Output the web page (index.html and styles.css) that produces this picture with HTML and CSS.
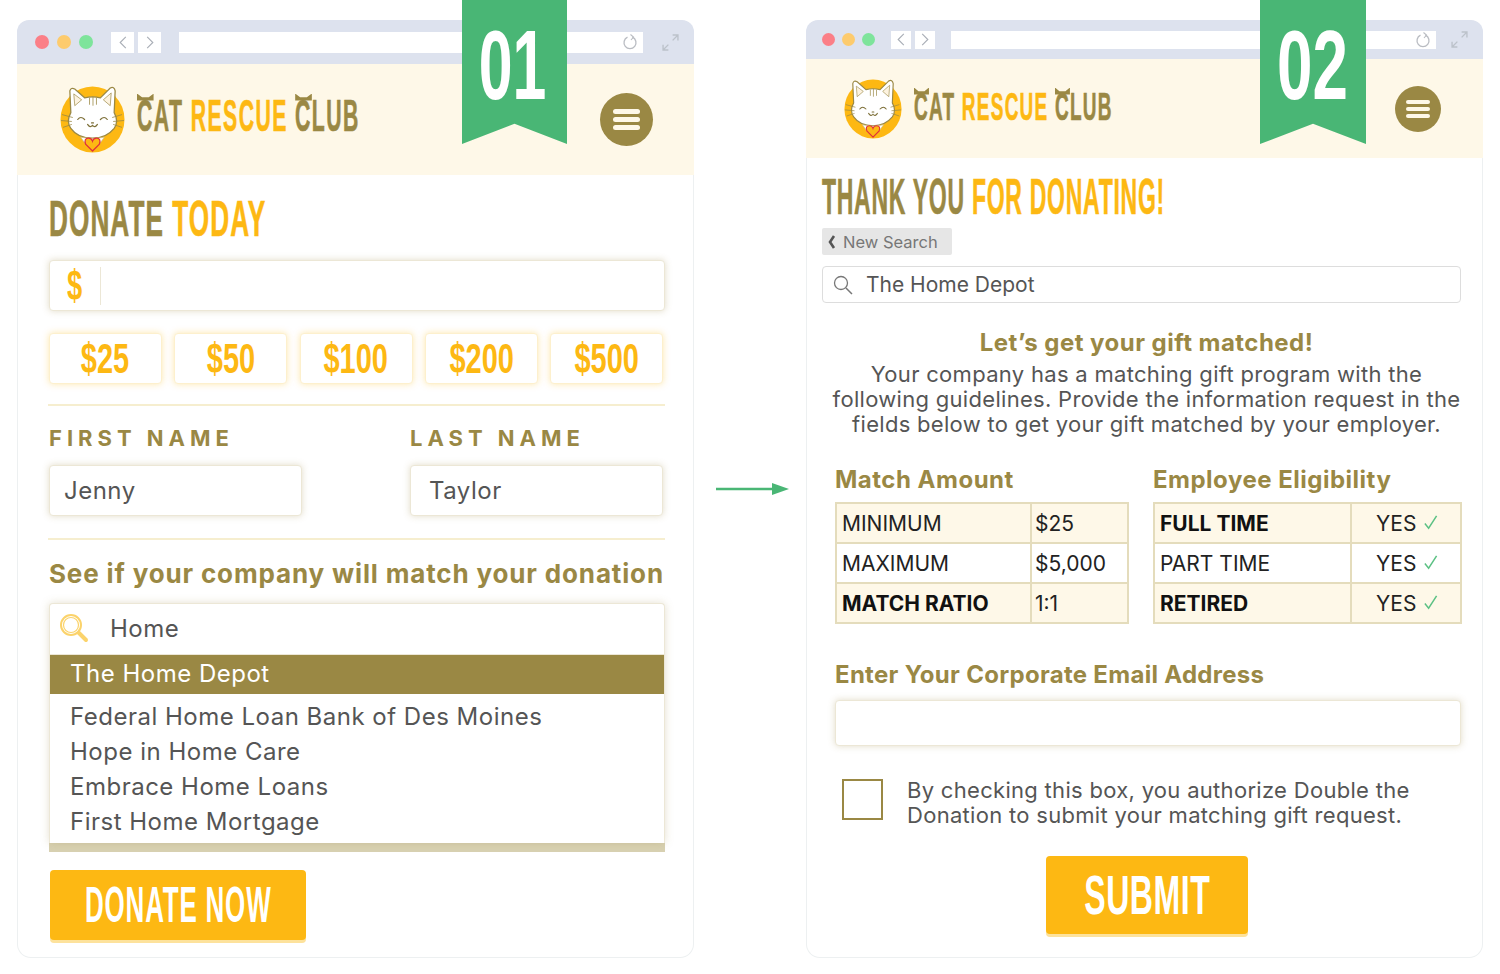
FILE: index.html
```html
<!DOCTYPE html>
<html lang="en">
<head>
    <meta charset="UTF-8">
    <title>Cat Rescue Club</title>
    <link rel="stylesheet" href="styles.css">
</head>
<body>
    <svg class="defs" width="0" height="0">
        <symbol id="cat" viewBox="0 0 66 68">
            <ellipse cx="33" cy="34" rx="32.500" ry="33.500" fill="#fdb813"/>
            <path d="M11 27 L10 5 Q11 1 15 3 L25 12 Q33 10 41 12 L51 2 Q55 0 56 5 L55 27 Q60 36 55 43 Q47 53 33 53 Q18 53 11 43 Q6 36 11 27 Z" fill="#fff" stroke="#9a8844" stroke-width="1.300"/>
            <path d="M14 8 L15 20 L22 14 Z M52 7 L51 20 L44 14 Z" fill="#fdf3e0" stroke="#9a8844" stroke-width=".7"/>
            <path d="M30 12 V19 M33.500 11 V20 M37 12 V19" stroke="#9a8844" stroke-width=".8" fill="none"/>
            <path d="M18 34 Q21 30 25 34 M41 34 Q45 30 48 34" stroke="#7d6f38" stroke-width="1.200" fill="none" stroke-linecap="round"/>
            <path d="M28 39 Q30.500 43 33 40 Q35.500 43 38 39 M32 37.500 H34" stroke="#7d6f38" stroke-width="1.200" fill="none" stroke-linecap="round"/>
            <path d="M2 29 L13 32 M1 35 L12 36 M3 42 L12 39 M53 32 L63 29 M54 36 L65 35 M54 39 L63 42" stroke="#9a8844" stroke-width=".8" fill="none"/>
            <path d="M21 52 L26 59 L40 59 L45 52 Q33 55 21 52 Z" fill="#fff" stroke="#c9bd8a" stroke-width=".7"/>
            <path d="M33 66 L26 59 Q24 53 29 53 Q32 53 33 56 Q34 53 37 53 Q42 53 40 59 Z" fill="#fdb813" stroke="#e0323a" stroke-width="1.300"/>
        </symbol>
        <symbol id="reload" viewBox="0 0 16 16">
            <path d="M10.500 3.200 A6 6 0 1 1 5.500 3.200" fill="none" stroke="#b9bcc2" stroke-width="1.300"/>
            <path d="M8.500 .5 L11.500 3 L9 6" fill="none" stroke="#b9bcc2" stroke-width="1.100"/>
        </symbol>
        <symbol id="expand" viewBox="0 0 16 16">
            <path d="M1 15 L6 10 M10 6 L15 1 M1 10 V15 H6 M10 1 H15 V6" fill="none" stroke="#bcc2ca" stroke-width="1.300"/>
        </symbol>
        <symbol id="tick" viewBox="0 0 16 16">
            <path d="M2 9 L6 14 L14.500 1" fill="none" stroke="#5cc184" stroke-width="1.600"/>
        </symbol>
    </svg>

    <div class="page">
        <section class="window window-one">
            <div class="ribbon"><span>01</span></div>
            <div class="chrome">
                <span class="dot red"></span>
                <span class="dot amber"></span>
                <span class="dot green"></span>
                <span class="nav"><svg viewBox="0 0 10 16"><path d="M8 2 L2 8 L8 14"/></svg></span>
                <span class="nav"><svg viewBox="0 0 10 16"><path d="M2 2 L8 8 L2 14"/></svg></span>
                <span class="url"><svg class="reload"><use href="#reload"/></svg></span>
                <svg class="expand"><use href="#expand"/></svg>
            </div>
            <header class="site-head">
                <div class="brand">
                    <svg class="cat"><use href="#cat"/></svg>
                    <div class="wordmark"><span class="eared">C</span>AT <em>RESCUE</em> <span class="eared">C</span>LUB</div>
                </div>
                <div class="menu"><i></i><i></i><i></i></div>
            </header>
            <div class="content">
                <h1 class="title">DONATE <em>TODAY</em></h1>
                <div class="field amount"><span class="dollar">$</span><span class="sep"></span></div>
                <div class="presets">
                    <div class="preset"><span>$25</span></div>
                    <div class="preset"><span>$50</span></div>
                    <div class="preset"><span>$100</span></div>
                    <div class="preset"><span>$200</span></div>
                    <div class="preset"><span>$500</span></div>
                </div>
                <div class="rule first-rule"></div>
                <div class="names">
                    <div>
                        <div class="label">FIRST NAME</div>
                        <div class="field name">Jenny</div>
                    </div>
                    <div>
                        <div class="label">LAST NAME</div>
                        <div class="field name last">Taylor</div>
                    </div>
                </div>
                <div class="rule second-rule"></div>
                <h2 class="match-head">See if your company will match your donation</h2>
                <div class="combo">
                    <div class="combo-input">
                        <svg class="gold-search" viewBox="0 0 30 30">
                            <circle cx="12" cy="12" r="10" fill="none" stroke="#fbd36b" stroke-width="2"/>
                            <circle cx="12" cy="12" r="7.500" fill="none" stroke="#fbd36b" stroke-width="1.200"/>
                            <path d="M20 20 L27 27" stroke="#fbd36b" stroke-width="4" stroke-linecap="round"/>
                        </svg>
                        <span>Home</span>
                    </div>
                    <div class="combo-active">The Home Depot</div>
                    <ul class="combo-list">
                        <li>Federal Home Loan Bank of Des Moines</li>
                        <li>Hope in Home Care</li>
                        <li>Embrace Home Loans</li>
                        <li>First Home Mortgage</li>
                    </ul>
                </div>
                <div class="btn donate"><span>DONATE NOW</span></div>
            </div>
        </section>

        <div class="flow-arrow">
            <svg width="74" height="14" viewBox="0 0 74 14">
                <path d="M0 7 H60" stroke="#49b675" stroke-width="2.500"/>
                <path d="M56 1 L73 7 L56 13 Z" fill="#49b675"/>
            </svg>
        </div>

        <section class="window window-two">
            <div class="ribbon"><span>02</span></div>
            <div class="chrome">
                <span class="dot red"></span>
                <span class="dot amber"></span>
                <span class="dot green"></span>
                <span class="nav"><svg viewBox="0 0 10 16"><path d="M8 2 L2 8 L8 14"/></svg></span>
                <span class="nav"><svg viewBox="0 0 10 16"><path d="M2 2 L8 8 L2 14"/></svg></span>
                <span class="url"><svg class="reload"><use href="#reload"/></svg></span>
                <svg class="expand"><use href="#expand"/></svg>
            </div>
            <header class="site-head">
                <div class="brand">
                    <svg class="cat"><use href="#cat"/></svg>
                    <div class="wordmark"><span class="eared">C</span>AT <em>RESCUE</em> <span class="eared">C</span>LUB</div>
                </div>
                <div class="menu"><i></i><i></i><i></i></div>
            </header>
            <div class="content">
                <h1 class="title">THANK YOU <em>FOR DONATING!</em></h1>
                <div class="chip"><svg viewBox="0 0 8 14"><path d="M6 1 L2 7 L6 13"/></svg>New Search</div>
                <div class="field found">
                    <svg class="grey-search" viewBox="0 0 20 20">
                        <circle cx="8" cy="8" r="6.500" fill="none" stroke="#777" stroke-width="1.300"/>
                        <path d="M13 13 L19 19" stroke="#777" stroke-width="1.500"/>
                    </svg>
                    <span>The Home Depot</span>
                </div>
                <h2 class="gift-head">Let’s get your gift matched!</h2>
                <p class="gift-copy">Your company has a matching gift program with the<br>following guidelines. Provide the information request in the<br>fields below to get your gift matched by your employer.</p>

                <div class="details">
                    <div class="table-grid">
                        <div>
                            <h3 class="sub-head">Match Amount</h3>
                            <table class="amount-table">
                                <tr><td>MINIMUM</td><td>$25</td></tr>
                                <tr><td>MAXIMUM</td><td>$5,000</td></tr>
                                <tr><td><b>MATCH RATIO</b></td><td>1:1</td></tr>
                            </table>
                        </div>
                        <div>
                            <h3 class="sub-head">Employee Eligibility</h3>
                            <table class="staff-table">
                                <tr><td><b>FULL TIME</b></td><td>YES <svg class="tick"><use href="#tick"/></svg></td></tr>
                                <tr><td>PART TIME</td><td>YES <svg class="tick"><use href="#tick"/></svg></td></tr>
                                <tr><td><b>RETIRED</b></td><td>YES <svg class="tick"><use href="#tick"/></svg></td></tr>
                            </table>
                        </div>
                    </div>
                    <h3 class="sub-head email-head">Enter Your Corporate Email Address</h3>
                    <div class="field email"></div>
                    <div class="consent">
                        <span class="checkbox"></span>
                        <p>By checking this box, you authorize Double the<br>Donation to submit your matching gift request.</p>
                    </div>
                </div>
                <div class="btn submit"><span>SUBMIT</span></div>
            </div>
        </section>
    </div>
</body>
</html>
```

FILE: styles.css
```css
* {
    box-sizing: border-box;
}

html, body {
    margin: 0;
    height: 100%;
    background: #fff;
    overflow: hidden;
}

body {
    font-family: "Inter", "Open Sans", sans-serif;
    color: #555;
}

.defs {
    position: absolute;
}

h1, h2, h3, p, ul {
    margin: 0;
    padding: 0;
}

em {
    font-style: normal;
    color: #fdb813;
}

.page {
    display: flex;
    padding: 20px 17px 0;
}

.flow-arrow {
    width: 112px;
    height: 938px;
    display: flex;
    align-items: center;
    justify-content: center;
    padding-left: 5px;
}

/* Browser frame */
.window {
    position: relative;
    width: 677px;
    height: 938px;
    border: 1px solid #edf0f1;
    border-top: 0;
    border-radius: 14px;
}

.chrome {
    display: flex;
    align-items: center;
    margin: 0 -1px;
    height: 44px;
    padding: 0 15px 0 18px;
    background: #dde2ee;
    border-radius: 12px 12px 0 0;
}

.window-two .chrome {
    height: 39px;
    padding-left: 16px;
}

.dot {
    width: 14px;
    height: 14px;
    border-radius: 50%;
    margin-right: 8px;
}

.window-two .dot {
    width: 13px;
    height: 13px;
    margin-right: 7px;
}

.red { background: #fb7f87; }
.amber { background: #fdcb6d; }
.green { background: #7ee49b; }

.nav {
    display: flex;
    align-items: center;
    justify-content: center;
    width: 23px;
    height: 21px;
    margin-left: 4px;
    background: #fff;
}

.nav:nth-of-type(4) {
    margin-left: 10px;
}

.window-two .nav {
    width: 20px;
    height: 18px;
    margin-left: 4px;
}

.window-two .nav:nth-of-type(4) {
    margin-left: 9px;
}

.nav svg {
    width: 10px;
    height: 15px;
}

.nav path {
    fill: none;
    stroke: #a9aeb6;
    stroke-width: 1.200;
}

.url {
    display: flex;
    align-items: center;
    justify-content: flex-end;
    flex: 1;
    height: 21px;
    margin: 0 19px 0 18px;
    padding-right: 5px;
    background: #fff;
}

.window-two .url {
    height: 18px;
    margin: 0 15px 0 16px;
}

.reload {
    width: 16px;
    height: 16px;
}

.expand {
    width: 17px;
    height: 17px;
}

.ribbon {
    position: absolute;
    top: -20px;
    left: 444px;
    display: flex;
    justify-content: center;
    width: 105px;
    height: 144px;
    padding-right: 4px;
    background: #49b675;
    clip-path: polygon(0 0, 100% 0, 100% 100%, 50% 86%, 0 100%);
    color: #fff;
    font: 700 98px/130px "Liberation Sans", sans-serif;
}

.ribbon span {
    flex: none;
    transform: scaleX(.62);
}

.window-two .ribbon {
    left: 453px;
    width: 106px;
    padding-right: 2px;
}

.window-two .ribbon span {
    transform: scaleX(.65);
}

/* Site header */
.site-head {
    display: flex;
    align-items: center;
    justify-content: space-between;
    margin: 0 -1px;
    height: 111px;
    padding: 0 41px 0 43px;
    background: #fef8e8;
}

.window-two .site-head {
    height: 99px;
    padding: 0 42px 0 38px;
}

.brand {
    display: flex;
    align-items: center;
    gap: 12px;
}

.cat {
    width: 65px;
    height: 67px;
}

.window-two .cat {
    width: 58px;
    height: 60px;
}

/* The display face is a squeezed bold sans */
.wordmark,
.title,
.dollar,
.preset,
.btn {
    font-family: "Liberation Sans", sans-serif;
    font-weight: 700;
}

.wordmark,
.title,
.dollar {
    transform-origin: left center;
}

.wordmark {
    width: 224px;
    margin-top: -8px;
    font-size: 44px;
    line-height: 44px;
    letter-spacing: 3px;
    color: #9a8844;
    white-space: nowrap;
    transform: scaleX(.482);
    -webkit-text-stroke: .7px currentColor;
}

.wordmark em {
    -webkit-text-stroke: .7px #fdb813;
}

.window-two .wordmark {
    width: 200px;
    margin-top: -5px;
    font-size: 39px;
    line-height: 39px;
    letter-spacing: 2.600px;
    transform: scaleX(.486);
}

.eared {
    position: relative;
}

.eared::before {
    content: "";
    position: absolute;
    top: 3px;
    left: 0;
    width: 100%;
    height: 7px;
    background: #9a8844;
    clip-path: polygon(0 0, 30% 55%, 70% 55%, 100% 0, 100% 100%, 0 100%);
}

.menu {
    display: flex;
    flex-direction: column;
    justify-content: center;
    align-items: center;
    gap: 3px;
    width: 53px;
    height: 53px;
    border-radius: 50%;
    background: #9a8844;
}

.window-two .menu {
    width: 46px;
    height: 46px;
}

.menu i {
    width: 27px;
    height: 5px;
    border-radius: 3px;
    background: #fef8e8;
}

.window-two .menu i {
    width: 24px;
    height: 4px;
}

/* Form, shared bits */
.content {
    padding: 19px 28px 0 31px;
}

.window-two .content {
    padding: 16px 21px 0 15px;
}

.title {
    font-size: 50px;
    line-height: 50px;
    letter-spacing: 2px;
    color: #9a8844;
    white-space: nowrap;
    transform: scaleX(.524);
    -webkit-text-stroke: .6px currentColor;
}

.title em {
    -webkit-text-stroke: .6px #fdb813;
}

.window-two .title {
    height: 46px;
    line-height: 46px;
    letter-spacing: 1.500px;
    transform: scaleX(.461);
}

.field {
    display: flex;
    align-items: center;
    background: #fff;
    border: 1px solid #ece7d6;
    border-radius: 4px;
    box-shadow: 0 0 7px rgba(154, 136, 68, .3);
    font-size: 24px;
    letter-spacing: .5px;
    color: #555;
}

.amount {
    height: 51px;
    margin-top: 16px;
    padding-left: 17px;
}

.dollar {
    width: 33px;
    font-size: 42px;
    color: #fdb813;
    transform: scaleX(.65);
}

.sep {
    width: 1px;
    height: 38px;
    background: #ece7d6;
}

.presets {
    display: grid;
    grid-template-columns: repeat(5, 113px);
    gap: 12.300px;
    margin-top: 22px;
}

.preset {
    display: flex;
    justify-content: center;
    height: 51px;
    line-height: 49px;
    font-size: 42px;
    color: #fdb813;
    background: #fff;
    border: 1px solid #fdf0cd;
    border-radius: 4px;
    box-shadow: 0 0 7px rgba(253, 184, 19, .34);
}

.preset span {
    flex: none;
    transform: scaleX(.69);
}

.rule {
    height: 2px;
    margin-left: -1px;
    background: #f6eecf;
}

.first-rule {
    margin-top: 20px;
}

.names {
    display: flex;
    justify-content: space-between;
    margin-top: 20px;
    padding-right: 2px;
}

.label {
    height: 24px;
    line-height: 24px;
    font-size: 22px;
    font-weight: 700;
    letter-spacing: 5px;
    color: #9a8844;
}

.name {
    width: 253px;
    height: 51px;
    margin-top: 15px;
    padding-left: 14px;
}

.name.last {
    padding-left: 18px;
}

.second-rule {
    margin-top: 22px;
}

.match-head {
    margin-top: 19px;
    font-size: 26px;
    line-height: 30px;
    font-weight: 700;
    letter-spacing: .85px;
    color: #9a8844;
    white-space: nowrap;
}

/* Company search with its open list */
.combo {
    position: relative;
    margin-top: 14px;
    height: 240px;
    background: #fff;
    border: 1px solid #ece7d6;
    border-bottom: 0;
    border-radius: 4px 4px 0 0;
    box-shadow: 0 0 8px rgba(154, 136, 68, .26), 0 9px 0 #d8d1b2;
    font-size: 24px;
    letter-spacing: .5px;
}

.combo-input {
    display: flex;
    align-items: center;
    height: 51px;
    padding: 0 0 2px 9px;
    border-bottom: 1px solid #ece7d6;
}

.gold-search {
    width: 30px;
    height: 30px;
    margin-right: 21px;
}

.combo-active {
    height: 39px;
    line-height: 37px;
    padding-left: 20px;
    background: #9a8844;
    color: #fff;
}

.combo-list {
    list-style: none;
    padding: 5px 0 3px 20px;
}

.combo-list li {
    height: 35px;
    line-height: 35px;
    white-space: nowrap;
}

.btn {
    display: flex;
    justify-content: center;
    color: #fff;
    background: #fdb813;
    border-radius: 4px;
    box-shadow: 0 3px 0 #fde29c;
}

.btn span {
    flex: none;
}

.donate {
    width: 256px;
    height: 70px;
    margin: 27px 0 0 1px;
    line-height: 70px;
    font-size: 50px;
    letter-spacing: 1.500px;
}

.donate span {
    transform: scaleX(.52);
}

/* Second window */
.chip {
    display: flex;
    align-items: center;
    width: 130px;
    height: 27px;
    margin-top: 8px;
    padding-left: 6px;
    font-size: 16.500px;
    color: #777;
    background: #e6e6e6;
    border-radius: 2px;
}

.chip svg {
    width: 8px;
    height: 14px;
    margin-right: 7px;
}

.chip path {
    fill: none;
    stroke: #555;
    stroke-width: 2.600;
}

.found {
    height: 37px;
    margin-top: 11px;
    padding-left: 10px;
    font-size: 21px;
    letter-spacing: 0;
    border-color: #ddd;
    box-shadow: none;
}

.grey-search {
    width: 20px;
    height: 20px;
    margin-right: 13px;
}

.gift-head {
    margin: 25px -10px 0 0;
    text-align: center;
    font-size: 24px;
    line-height: 30px;
    font-weight: 700;
    letter-spacing: .46px;
    color: #9a8844;
}

.gift-copy {
    margin: 4px -10px 0 0;
    text-align: center;
    font-size: 22px;
    line-height: 25px;
    letter-spacing: .3px;
}

.details {
    padding-left: 13px;
}

.table-grid {
    display: flex;
    gap: 24px;
    margin-top: 28px;
}

.sub-head {
    font-size: 24px;
    line-height: 30px;
    font-weight: 700;
    letter-spacing: .5px;
    color: #9a8844;
    white-space: nowrap;
}

table {
    margin-top: 7px;
    border-collapse: collapse;
    font-size: 21px;
    color: #222;
    border: 2px solid #e4dcbc;
}

td {
    height: 40px;
    padding: 0 0 0 5px;
    border: 2px solid #e4dcbc;
}

td b {
    color: #111;
}

tr:nth-child(odd) td {
    background: #fef8e8;
}

.amount-table {
    width: 294px;
}

.amount-table td:first-child {
    width: 195px;
}

.amount-table td:last-child {
    padding-left: 3px;
}

.staff-table {
    width: 309px;
}

.staff-table td:first-child {
    width: 197px;
}

.staff-table td:last-child {
    padding-left: 24px;
}

.tick {
    width: 15px;
    height: 15px;
    margin-left: 1px;
    vertical-align: 1px;
}

.sub-head.email-head {
    margin-top: 36px;
    letter-spacing: .3px;
}

.email {
    height: 46px;
    margin-top: 10px;
}

.consent {
    display: flex;
    align-items: flex-start;
    margin: 33px 0 0 7px;
}

.checkbox {
    flex: none;
    width: 41px;
    height: 41px;
    border: 2px solid #9a8844;
}

.consent p {
    margin: -1px 0 0 24px;
    font-size: 22px;
    line-height: 25px;
    letter-spacing: .3px;
    white-space: nowrap;
}

.submit {
    width: 202px;
    height: 78px;
    margin: 28px auto 0 224px;
    line-height: 78px;
    font-size: 56px;
    letter-spacing: 1px;
}

.submit span {
    transform: scaleX(.572);
}
```
